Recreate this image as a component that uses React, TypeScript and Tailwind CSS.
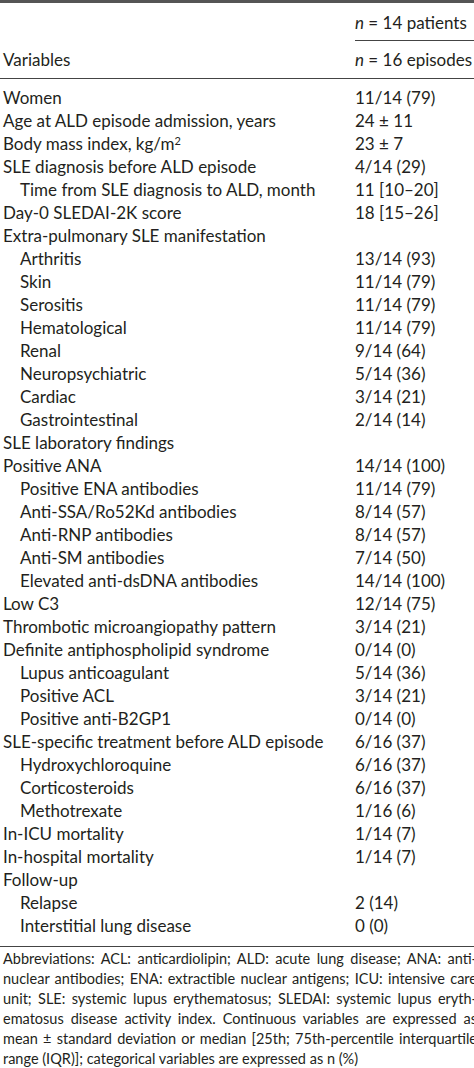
type Row = { label: string; value?: string; indent?: boolean; sup?: string };

const rows: Row[] = [
  { label: "Women", value: "11/14 (79)" },
  { label: "Age at ALD episode admission, years", value: "24 ± 11" },
  { label: "Body mass index, kg/m", sup: "2", value: "23 ± 7" },
  { label: "SLE diagnosis before ALD episode", value: "4/14 (29)" },
  { label: "Time from SLE diagnosis to ALD, month", value: "11 [10–20]", indent: true },
  { label: "Day-0 SLEDAI-2K score", value: "18 [15–26]" },
  { label: "Extra-pulmonary SLE manifestation" },
  { label: "Arthritis", value: "13/14 (93)", indent: true },
  { label: "Skin", value: "11/14 (79)", indent: true },
  { label: "Serositis", value: "11/14 (79)", indent: true },
  { label: "Hematological", value: "11/14 (79)", indent: true },
  { label: "Renal", value: "9/14 (64)", indent: true },
  { label: "Neuropsychiatric", value: "5/14 (36)", indent: true },
  { label: "Cardiac", value: "3/14 (21)", indent: true },
  { label: "Gastrointestinal", value: "2/14 (14)", indent: true },
  { label: "SLE laboratory findings" },
  { label: "Positive ANA", value: "14/14 (100)" },
  { label: "Positive ENA antibodies", value: "11/14 (79)", indent: true },
  { label: "Anti-SSA/Ro52Kd antibodies", value: "8/14 (57)", indent: true },
  { label: "Anti-RNP antibodies", value: "8/14 (57)", indent: true },
  { label: "Anti-SM antibodies", value: "7/14 (50)", indent: true },
  { label: "Elevated anti-dsDNA antibodies", value: "14/14 (100)", indent: true },
  { label: "Low C3", value: "12/14 (75)" },
  { label: "Thrombotic microangiopathy pattern", value: "3/14 (21)" },
  { label: "Definite antiphospholipid syndrome", value: "0/14 (0)" },
  { label: "Lupus anticoagulant", value: "5/14 (36)", indent: true },
  { label: "Positive ACL", value: "3/14 (21)", indent: true },
  { label: "Positive anti-B2GP1", value: "0/14 (0)", indent: true },
  { label: "SLE-specific treatment before ALD episode", value: "6/16 (37)" },
  { label: "Hydroxychloroquine", value: "6/16 (37)", indent: true },
  { label: "Corticosteroids", value: "6/16 (37)", indent: true },
  { label: "Methotrexate", value: "1/16 (6)", indent: true },
  { label: "In-ICU mortality", value: "1/14 (7)" },
  { label: "In-hospital mortality", value: "1/14 (7)" },
  { label: "Follow-up" },
  { label: "Relapse", value: "2 (14)", indent: true },
  { label: "Interstitial lung disease", value: "0 (0)", indent: true },
];

// footnote lines are set one by one, justified like the printed table
const footnote = [
  "Abbreviations: ACL: anticardiolipin; ALD: acute lung disease; ANA: anti-",
  "nuclear antibodies; ENA: extractible nuclear antigens; ICU: intensive care",
  "unit; SLE: systemic lupus erythematosus; SLEDAI: systemic lupus eryth-",
  "ematosus disease activity index. Continuous variables are expressed as",
  "mean ± standard deviation or median [25th; 75th-percentile interquartile",
];

export default function App() {
  return (
    <div className="w-[474px] overflow-hidden bg-white">
      <div
        className="w-[480px] text-[17px] text-[#231f20]"
        style={{ fontFamily: "Lato, 'Open Sans', sans-serif" }}
      >
        <div className="border-t-[3px] border-[#555]">
          <div className="grid grid-cols-[355px_1fr]">
            <div />
            <div className="whitespace-nowrap border-b border-[#444] pt-[8px] pb-[6px] leading-[23px]">
              <i>n</i> = 14 patients
            </div>
          </div>
          <div className="grid grid-cols-[355px_1fr] border-b border-[#444] pt-[7px] pb-[7px] leading-[23px]">
            <div className="pl-[3px]">Variables</div>
            <div className="whitespace-nowrap">
              <i>n</i> = 16 episodes
            </div>
          </div>
        </div>

        <div className="border-b border-[#444] pt-[7px] pb-[9px]">
          {rows.map((r, i) => (
            <div key={i} className="grid h-[23px] grid-cols-[355px_1fr] leading-[23px]">
              <div className={`whitespace-nowrap ${r.indent ? "pl-[20px]" : "pl-[3px]"}`}>
                {r.label}
                {r.sup && <sup className="text-[11px]">{r.sup}</sup>}
              </div>
              <div className="whitespace-nowrap">{r.value}</div>
            </div>
          ))}
        </div>

        <div className="pl-[3px] pr-[3px] pt-[2px] text-[14.5px] leading-[20px]">
          {footnote.map((line, i) => (
            <div key={i} className="whitespace-nowrap text-justify [text-align-last:justify]">
              {line}
            </div>
          ))}
          <div className="whitespace-nowrap">range (IQR)]; categorical variables are expressed as n (%)</div>
        </div>
      </div>
    </div>
  );
}
